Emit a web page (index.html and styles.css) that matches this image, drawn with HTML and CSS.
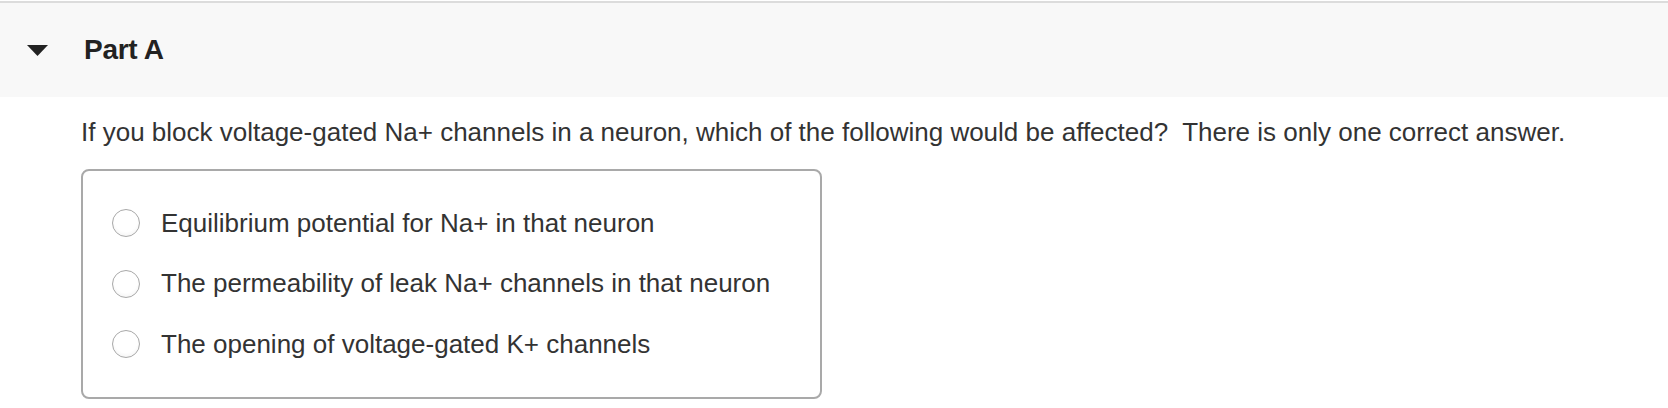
FILE: index.html
```html
<!DOCTYPE html>
<html>
<head>
<meta charset="utf-8">
<link rel="stylesheet" href="styles.css">
</head>
<body>
<div class="part">
  <div class="part-header">
    <svg class="caret" width="21" height="11" viewBox="0 0 21 11"><path d="M0 0 H21 L10.5 11 Z" fill="#222"/></svg>
    <h2 class="part-title">Part A</h2>
  </div>
  <div class="part-body">
    <p class="question">If you block voltage-gated Na+ channels in a neuron, which of the following would be affected?&nbsp; There is only one correct answer.</p>
    <div class="choices">
      <label class="choice"><span class="radio"></span><span class="choice-text">Equilibrium potential for Na+ in that neuron</span></label>
      <label class="choice"><span class="radio"></span><span class="choice-text">The permeability of leak Na+ channels in that neuron</span></label>
      <label class="choice"><span class="radio"></span><span class="choice-text">The opening of voltage-gated K+ channels</span></label>
    </div>
  </div>
</div>
</body>
</html>
```
FILE: styles.css
```css
html, body {
  margin: 0;
  padding: 0;
  background: #fff;
}
body {
  font-family: "Liberation Sans", Arial, sans-serif;
  color: #333;
}
.part {
  padding-top: 1px;
}
.part-header {
  border-top: 2px solid #dcdcdc;
  background: #f8f8f8;
  height: 94px;
  display: flex;
  align-items: center;
  padding-left: 27px;
}
.caret {
  display: block;
  margin-top: 0;
}
.part-title {
  margin: 0 0 0 36px;
  font-size: 28px;
  font-weight: bold;
  color: #222;
  letter-spacing: -0.3px;
}
.part-body {
  padding-left: 81px;
}
.question {
  margin: 0;
  padding-top: 20px;
  font-size: 26px;
  line-height: 30px;
  color: #333;
}
.choices {
  margin-top: 22px;
  width: 708px;
  border: 2px solid #a9a9a9;
  border-radius: 8px;
  padding: 37px 0 38px 29px;
  display: flex;
  flex-direction: column;
  gap: 30.5px;
}
.choice {
  display: flex;
  align-items: center;
  height: 30px;
}
.radio {
  width: 26px;
  height: 26px;
  border: 1px solid #a8a8a8;
  border-radius: 50%;
  background: radial-gradient(circle at 50% 40%, #ffffff 55%, #ececec 100%);
  box-sizing: content-box;
  flex: none;
}
.choice-text {
  margin-left: 21px;
  font-size: 26px;
  color: #333;
}
```
